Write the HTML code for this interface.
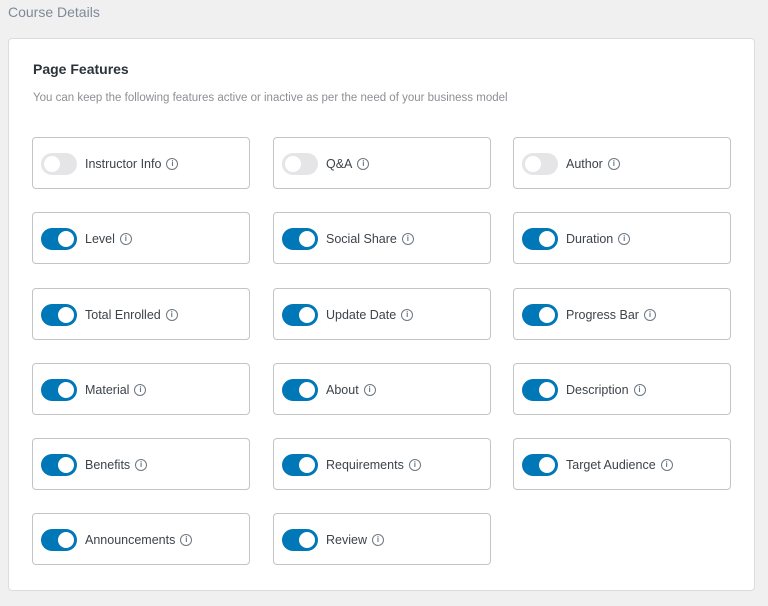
<!DOCTYPE html>
<html><head><style>
body{margin:0;background:#f0f0f1;font-family:"Liberation Sans",sans-serif;width:768px;height:606px;overflow:hidden;position:relative}
.h{position:absolute;left:8px;top:4px;font-size:14px;color:#7e8a99}
.card{position:absolute;left:8px;top:38px;width:747px;height:553px;background:#fff;border:1px solid #dcdcde;border-radius:4px;box-sizing:border-box}
.t{position:absolute;left:24px;top:22px;font-size:14px;font-weight:bold;color:#2c3338}
.s{position:absolute;left:24px;top:53px;font-size:11.5px;color:#8c8f94}
.it{position:absolute;width:218px;height:52px;border:1px solid #c3c4c7;border-radius:4px;box-sizing:border-box;display:flex;align-items:center;padding-top:1px}
.tg{margin-left:8px;width:36px;height:22px;border-radius:11px;background:#0077b6;position:relative;flex:none}
.tg::after{content:"";position:absolute;right:3px;top:3px;width:16px;height:16px;border-radius:50%;background:#fff}
.tg.off{background:#e5e5e8}.tg.off::after{left:3px;right:auto}
.l{margin-left:8px;font-size:12.5px;color:#3c434a}
.i{margin-left:5px;width:10px;height:10px;border:1px solid #6c7781;border-radius:50%;font-size:8px;line-height:10px;text-align:center;color:#6c7781;font-weight:bold}
</style></head><body>
<div class="h">Course Details</div>
<div class="card"><div class="t">Page Features</div><div class="s">You can keep the following features active or inactive as per the need of your business model</div></div>
<div class="it" style="left:32px;top:137px"><div class="tg off"></div><span class="l">Instructor Info</span><span class="i">i</span></div>
<div class="it" style="left:273px;top:137px"><div class="tg off"></div><span class="l">Q&amp;A</span><span class="i">i</span></div>
<div class="it" style="left:513px;top:137px"><div class="tg off"></div><span class="l">Author</span><span class="i">i</span></div>
<div class="it" style="left:32px;top:212px"><div class="tg"></div><span class="l">Level</span><span class="i">i</span></div>
<div class="it" style="left:273px;top:212px"><div class="tg"></div><span class="l">Social Share</span><span class="i">i</span></div>
<div class="it" style="left:513px;top:212px"><div class="tg"></div><span class="l">Duration</span><span class="i">i</span></div>
<div class="it" style="left:32px;top:288px"><div class="tg"></div><span class="l">Total Enrolled</span><span class="i">i</span></div>
<div class="it" style="left:273px;top:288px"><div class="tg"></div><span class="l">Update Date</span><span class="i">i</span></div>
<div class="it" style="left:513px;top:288px"><div class="tg"></div><span class="l">Progress Bar</span><span class="i">i</span></div>
<div class="it" style="left:32px;top:363px"><div class="tg"></div><span class="l">Material</span><span class="i">i</span></div>
<div class="it" style="left:273px;top:363px"><div class="tg"></div><span class="l">About</span><span class="i">i</span></div>
<div class="it" style="left:513px;top:363px"><div class="tg"></div><span class="l">Description</span><span class="i">i</span></div>
<div class="it" style="left:32px;top:438px"><div class="tg"></div><span class="l">Benefits</span><span class="i">i</span></div>
<div class="it" style="left:273px;top:438px"><div class="tg"></div><span class="l">Requirements</span><span class="i">i</span></div>
<div class="it" style="left:513px;top:438px"><div class="tg"></div><span class="l">Target Audience</span><span class="i">i</span></div>
<div class="it" style="left:32px;top:513px"><div class="tg"></div><span class="l">Announcements</span><span class="i">i</span></div>
<div class="it" style="left:273px;top:513px"><div class="tg"></div><span class="l">Review</span><span class="i">i</span></div>
</body></html>
